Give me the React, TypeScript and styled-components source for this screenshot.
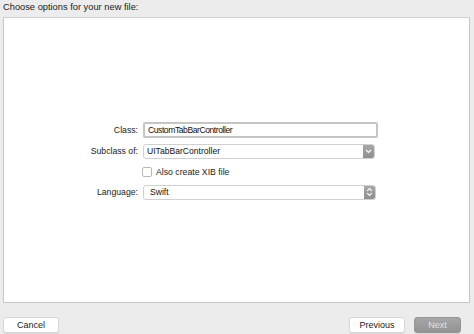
import React from "react";
import styled, { createGlobalStyle } from "styled-components";

const GlobalStyle = createGlobalStyle`
    html, body {
        margin: 0;
        padding: 0;
        background: #ececec;
    }
    body {
        font-family: "Liberation Sans", Arial, sans-serif;
        font-size: 9px;
        color: #1e1e1e;
    }
`

const Window = styled.div`
    width: 474px;
    height: 334px;
    display: flex;
    flex-direction: column;
    background: #ececec;
    overflow: hidden;
`

const Title = styled.div`
    height: 17px;
    padding-left: 3px;
    line-height: 15px;
    font-size: 9.3px;
    color: #222;
`

const Panel = styled.div`
    margin: 0 4px 0 3px;
    height: 286px;
    box-sizing: border-box;
    background: #fff;
    border: 1px solid #c6c6c6;
    border-top-color: #d2d2d2;
    display: flex;
    align-items: center;
    padding-top: 1px;
`

const Form = styled.div`
    display: grid;
    grid-template-columns: 134px 234px;
    column-gap: 5px;
    row-gap: 6px;
    align-items: center;
`

const Label = styled.label`
    text-align: right;
    font-size: 8.7px;
    color: #222;
`

const TextField = styled.div`
    height: 16px;
    box-sizing: border-box;
    border: 2px solid #c5c5c5;
    border-radius: 2px;
    padding: 0 3px;
    display: flex;
    align-items: center;
    font-size: 8.6px;
    letter-spacing: -0.45px;
    color: #111;
    margin-right: -1px;
`

const Popup = styled.div<{ $width: number }>`
    width: ${({ $width }) => $width}px;
    height: 15px;
    box-sizing: border-box;
    border: 1px solid #d0d0d0;
    border-radius: 3px;
    background: #fff;
    display: flex;
    align-items: center;
    font-size: 8.6px;
    color: #111;
    overflow: hidden;
`

const PopupText = styled.span<{ $indent: number }>`
    flex: 1;
    padding-left: ${({ $indent }) => $indent}px;
`

const ArrowButton = styled.span`
    width: 11px;
    height: 100%;
    background: linear-gradient(#a8a8a8, #8e8e8e);
    display: flex;
    align-items: center;
    justify-content: center;
`

const CheckRow = styled.div`
    display: flex;
    align-items: center;
    gap: 4px;
    height: 14px;
    font-size: 8.7px;
    color: #222;
`

const CheckBox = styled.span`
    width: 10px;
    height: 10px;
    box-sizing: border-box;
    border: 1px solid #b8b8b8;
    border-radius: 2px;
    background: #fff;
    margin-left: -1px;
`

const Footer = styled.div`
    flex: 1;
    display: flex;
    align-items: center;
    justify-content: space-between;
    padding: 12px 13px 0 3px;
`

const ButtonGroup = styled.div`
    display: flex;
    gap: 9px;
`

const Button = styled.div<{ $width: number; $disabled?: boolean }>`
    width: ${({ $width }) => $width}px;
    height: 16px;
    box-sizing: border-box;
    border-radius: 3px;
    display: flex;
    align-items: center;
    justify-content: center;
    font-size: 9px;
    background: ${({ $disabled }) => $disabled ? "linear-gradient(#a6a6a6, #939393)" : "#fff"};
    color: ${({ $disabled }) => $disabled ? "#e2e2e2" : "#1a1a1a"};
    border: 1px solid ${({ $disabled }) => $disabled ? "#959595" : "#d6d6d6"};
    box-shadow: 0 1px 0 rgba(0, 0, 0, 0.08);
`

function Chevron(): JSX.Element {
    return (
        <svg width="7" height="5" viewBox="0 0 7 5">
            <path d="M1 1 L3.5 3.5 L6 1" stroke="#fff" strokeWidth="1.1" fill="none" />
        </svg>
    )
}

function Stepper(): JSX.Element {
    return (
        <svg width="7" height="10" viewBox="0 0 7 10">
            <path d="M1.2 3.8 L3.5 1.5 L5.8 3.8 M1.2 6.2 L3.5 8.5 L5.8 6.2" stroke="#fff" strokeWidth="1.1" fill="none" />
        </svg>
    )
}

export default function App(): JSX.Element {
    return (
        <Window>
            <GlobalStyle />
            <Title>Choose options for your new file:</Title>
            <Panel>
                <Form>
                    <Label>Class:</Label>
                    <TextField>CustomTabBarController</TextField>
                    <Label>Subclass of:</Label>
                    <Popup $width={232}>
                        <PopupText $indent={3}>UITabBarController</PopupText>
                        <ArrowButton><Chevron /></ArrowButton>
                    </Popup>
                    <span />
                    <CheckRow>
                        <CheckBox />
                        Also create XIB file
                    </CheckRow>
                    <Label>Language:</Label>
                    <Popup $width={233}>
                        <PopupText $indent={6}>Swift</PopupText>
                        <ArrowButton><Stepper /></ArrowButton>
                    </Popup>
                </Form>
            </Panel>
            <Footer>
                <Button $width={56}>Cancel</Button>
                <ButtonGroup>
                    <Button $width={56}>Previous</Button>
                    <Button $width={47} $disabled>Next</Button>
                </ButtonGroup>
            </Footer>
        </Window>
    )
}
